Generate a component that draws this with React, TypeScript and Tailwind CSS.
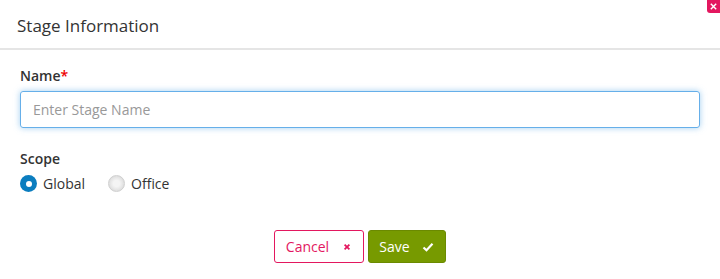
import { useState } from 'react';

export default function App() {
  const [scope, setScope] = useState<'global' | 'office'>('global');

  return (
    <div
      className="relative w-[720px] h-[279px] bg-white text-[#333] overflow-hidden"
      style={{ fontFamily: '"Open Sans", "Noto Sans", sans-serif' }}
    >
      {/* Close */}
      <button className="absolute top-0 right-0 w-[13px] h-[13px] bg-[#e3175f] rounded-bl-[3px] flex items-center justify-center">
        <svg viewBox="0 0 10 10" className="w-[9px] h-[9px]">
          <path d="M2 2 L8 8 M8 2 L2 8" stroke="white" strokeWidth="1.6" />
        </svg>
      </button>

      {/* Header */}
      <div className="h-[50px] border-b-2 border-[#e5e5e5] px-[17px] pt-[3px] flex items-center">
        <h2 className="text-[17px] text-[#333] leading-none">Stage Information</h2>
      </div>

      {/* Body */}
      <div className="px-[20px] pt-[16px]">
        <label className="block text-[14px] font-semibold leading-[20px] text-[#333]">
          Name<span className="text-[#e00]">*</span>
        </label>
        <input
          className="mt-[5px] w-full h-[37px] rounded-[3px] border border-[#66afe9] px-[12px] text-[14px] outline-none shadow-[0_0_6px_rgba(102,175,233,0.6)] placeholder:text-[#999]"
          placeholder="Enter Stage Name"
        />

        <div className="mt-[21px] text-[14px] font-semibold leading-[20px] text-[#333]">Scope</div>
        <div className="mt-[4px] flex items-center gap-[23px] text-[14px] text-[#333]">
          <label className="flex items-center gap-[6px] cursor-pointer" onClick={() => setScope('global')}>
            <span
              className={
                scope === 'global'
                  ? 'w-[17px] h-[17px] rounded-full bg-[#0b7dbf] flex items-center justify-center'
                  : 'w-[17px] h-[17px] rounded-full bg-[radial-gradient(circle,#f4f4f4_30%,#cfcfcf_100%)] border border-[#d0d0d0]'
              }
            >
              {scope === 'global' && <span className="w-[6px] h-[6px] rounded-full bg-white" />}
            </span>
            Global
          </label>
          <label className="flex items-center gap-[6px] cursor-pointer" onClick={() => setScope('office')}>
            <span
              className={
                scope === 'office'
                  ? 'w-[17px] h-[17px] rounded-full bg-[#0b7dbf] flex items-center justify-center'
                  : 'w-[17px] h-[17px] rounded-full bg-[radial-gradient(circle,#f4f4f4_30%,#cfcfcf_100%)] border border-[#d0d0d0]'
              }
            >
              {scope === 'office' && <span className="w-[6px] h-[6px] rounded-full bg-white" />}
            </span>
            Office
          </label>
        </div>
      </div>

      {/* Footer */}
      <div className="mt-[36px] flex justify-center gap-[4px]">
        <button className="h-[33px] w-[90px] ml-[-1px] rounded-[3px] border border-[#e3175f] bg-white text-[#e3175f] text-[14px] flex items-center justify-center gap-[14px]">
          Cancel
          <svg viewBox="0 0 10 10" className="w-[8px] h-[8px]">
            <path d="M2 2 L8 8 M8 2 L2 8" stroke="#e3175f" strokeWidth="2.2" />
          </svg>
        </button>
        <button className="h-[33px] w-[78px] rounded-[3px] bg-[#779a00] border border-[#6b8a00] text-white text-[14px] flex items-center justify-center gap-[12px]">
          Save
          <svg viewBox="0 0 12 10" className="w-[12px] h-[10px]">
            <path d="M1.5 5.5 L4.5 8.2 L10.5 1.8" stroke="white" strokeWidth="2.2" fill="none" />
          </svg>
        </button>
      </div>
    </div>
  );
}
